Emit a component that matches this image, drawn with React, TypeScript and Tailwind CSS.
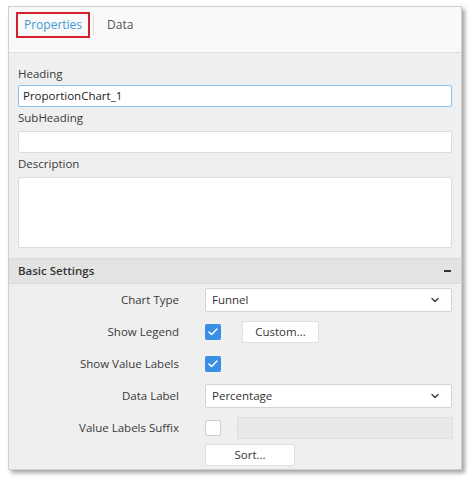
import { ChevronDown, Check } from "lucide-react";

const font = { fontFamily: '"Open Sans", "Noto Sans", sans-serif' };

function Select({ value }: { value: string }) {
  return (
    <div className="flex h-[24px] w-[247px] items-center justify-between rounded-[2px] border border-[#d4d4d4] bg-white pl-[6px] pr-[10px] text-[11.5px] text-[#333]">
      <span>{value}</span>
      <ChevronDown size={12} strokeWidth={3} className="text-[#444]" />
    </div>
  );
}

function Checkbox({ checked }: { checked: boolean }) {
  return checked ? (
    <div className="flex h-[16px] w-[16px] items-center justify-center rounded-[2px] bg-[#3a8ee6]">
      <Check size={12} strokeWidth={3} className="text-white" />
    </div>
  ) : (
    <div className="h-[16px] w-[16px] rounded-[2px] border border-[#cfcfcf] bg-white" />
  );
}

function Row({ label, children }: { label: string; children: React.ReactNode }) {
  return (
    <div className="flex h-[32px] items-center">
      <div className="w-[170px] text-right text-[11.5px] text-[#3a3a3a]">{label}</div>
      <div className="ml-[26px] flex items-center">{children}</div>
    </div>
  );
}

export default function App() {
  return (
    <div className="h-[483px] w-[474px] bg-white pl-[8px] pt-[6px]" style={font}>
      <div className="flex h-[464px] w-[454px] flex-col overflow-hidden border border-[#cfcfcf] bg-[#efefef] shadow-[3px_3px_4px_rgba(0,0,0,0.35)]">
        <div className="flex h-[46px] shrink-0 items-start border-b border-[#dedede] bg-[#f9f9f9] pl-[7px] pt-[5px]">
          <div className="flex h-[26px] w-[74px] items-center justify-center border-2 border-[#d2202f] text-[12px] text-[#3d9ad8]">
            Properties
          </div>
          <div className="mx-[3px] mt-[3px] h-[20px] w-px bg-[#dcdcdc]" />
          <div className="flex h-[26px] items-center pl-[10px] text-[12px] text-[#555]">Data</div>
        </div>
        <div className="flex flex-col px-[9px] pt-[10px]">
          <div className="h-[22px] text-[11.5px] leading-[22px] text-[#3a3a3a]">Heading</div>
          <div className="flex h-[22px] items-center rounded-[2px] border border-[#8cc1ea] bg-white px-[4px] text-[11.5px] text-[#222]">
            ProportionChart_1
          </div>
          <div className="h-[24px] pb-[2px] text-[11.5px] leading-[22px] text-[#3a3a3a]">SubHeading</div>
          <div className="h-[22px] rounded-[2px] border border-[#dcdcdc] bg-white" />
          <div className="h-[24px] pb-[2px] text-[11.5px] leading-[22px] text-[#3a3a3a]">Description</div>
          <div className="h-[71px] rounded-[2px] border border-[#dcdcdc] bg-white" />
        </div>
        <div className="mt-[10px] flex h-[26px] shrink-0 items-center justify-between border-y border-[#dadada] bg-[#e3e3e3] pl-[9px] pr-[10px]">
          <span className="text-[11.5px] font-semibold text-[#333]">Basic Settings</span>
          <span className="h-[2px] w-[7px] bg-[#333]" />
        </div>
        <div className="flex flex-col">
          <Row label="Chart Type">
            <Select value="Funnel" />
          </Row>
          <Row label="Show Legend">
            <Checkbox checked />
            <button className="ml-[21px] h-[22px] w-[77px] rounded-[2px] border border-[#e0e0e0] bg-white text-[11.5px] text-[#333]">
              Custom...
            </button>
          </Row>
          <Row label="Show Value Labels">
            <Checkbox checked />
          </Row>
          <Row label="Data Label">
            <Select value="Percentage" />
          </Row>
          <Row label="Value Labels Suffix">
            <Checkbox checked={false} />
            <div className="ml-[16px] h-[22px] w-[216px] rounded-[2px] border border-[#dedede] bg-[#e8e8e8]" />
          </Row>
          <div className="flex h-[22px] items-center">
            <div className="w-[170px]" />
            <button className="ml-[26px] h-[22px] w-[90px] rounded-[2px] border border-[#e0e0e0] bg-white text-[11.5px] text-[#333]">
              Sort...
            </button>
          </div>
        </div>
      </div>
    </div>
  );
}
